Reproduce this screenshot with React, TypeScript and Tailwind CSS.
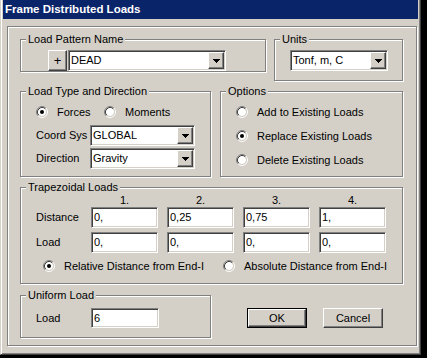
import React from 'react';

const sunken =
  'border border-t-[#808080] border-l-[#808080] border-r-white border-b-white shadow-[inset_1px_1px_0_#404040,inset_-1px_-1px_0_#d4d0c8]';
const raised =
  'border border-t-white border-l-white border-r-[#404040] border-b-[#404040] shadow-[inset_-1px_-1px_0_#808080,inset_1px_1px_0_#d4d0c8] bg-[#d4d0c8]';

function Group({ label, className, children }: { label: string; className: string; children?: React.ReactNode }) {
  return (
    <div className={`relative border border-[#808080] shadow-[inset_1px_1px_0_#fff,1px_1px_0_#fff] ${className}`}>
      <span className="absolute left-[5px] -top-[7px] bg-[#d4d0c8] px-[2px] whitespace-nowrap">{label}</span>
      {children}
    </div>
  );
}

function Radio({ checked }: { checked?: boolean }) {
  return (
    <svg width="12" height="12" viewBox="0 0 12 12" className="shrink-0">
      <circle cx="6" cy="6" r="4" fill="#fff" />
      <path d="M2.11 9.89A5.5 5.5 0 0 1 9.89 2.11" fill="none" stroke="#808080" />
      <path d="M9.89 2.11A5.5 5.5 0 0 1 2.11 9.89" fill="none" stroke="#fff" />
      <path d="M2.82 9.18A4.5 4.5 0 0 1 9.18 2.82" fill="none" stroke="#404040" />
      <path d="M9.18 2.82A4.5 4.5 0 0 1 2.82 9.18" fill="none" stroke="#d4d0c8" />
      {checked && <circle cx="6" cy="6" r="2" fill="#000" />}
    </svg>
  );
}

function RadioItem({ label, checked, className = '' }: { label: string; checked?: boolean; className?: string }) {
  return (
    <div className={`flex items-center h-[14px] ${className}`}>
      <Radio checked={checked} />
      <span className="ml-[9px] whitespace-nowrap">{label}</span>
    </div>
  );
}

function Combo({ value, className }: { value: string; className: string }) {
  return (
    <div className={`flex items-stretch bg-white p-[1px] ${sunken} ${className}`}>
      <span className="flex-1 flex items-center pl-[1px] whitespace-nowrap">{value}</span>
      <div className={`w-[16px] flex items-center justify-center ${raised}`}>
        <svg width="7" height="4" viewBox="0 0 7 4">
          <path d="M0 0h7v1h-1v1h-1v1h-1v1h-1v-1h-1v-1h-1v-1h-1z" fill="#000" />
        </svg>
      </div>
    </div>
  );
}

function Field({ value }: { value: string }) {
  return <div className={`w-[67px] h-[21px] bg-white flex items-center pl-[2px] ${sunken}`}>{value}</div>;
}

export default function App() {
  return (
    <div className="min-h-screen w-full bg-black font-['Liberation_Sans',Arial,sans-serif] text-[11px] leading-[13px] text-black">
      <div className="w-[421px] h-[355px] bg-[#d4d0c8] border border-t-0 border-l-[#d4d0c8] border-r-[#404040] border-b-[#404040] shadow-[inset_1px_0_0_#fff,inset_-1px_-1px_0_#808080] px-[2px] pb-[2px] flex flex-col">
        <div className="h-[19px] shrink-0 bg-[#0a246a] text-white font-bold text-[11.5px] flex items-center pl-[2px]">
          Frame Distributed Loads
        </div>

        <div className="ml-[4px] mt-[7px] w-[410px] h-[320px] border border-[#808080] shadow-[inset_1px_1px_0_#fff,1px_1px_0_#fff] pl-[12px] pt-[12px] flex flex-col">
          {/* pattern + units */}
          <div className="flex items-start">
            <Group label="Load Pattern Name" className="w-[246px] h-[33px] pl-[27px] pt-[10px]">
              <div className="flex">
                <div className={`w-[19px] h-[21px] flex items-center justify-center text-[13px] ${raised}`}>+</div>
                <Combo value="DEAD" className="ml-[1px] w-[158px] h-[21px]" />
              </div>
            </Group>
            <Group label="Units" className="ml-[8px] w-[129px] h-[42px] pl-[15px] pt-[10px]">
              <Combo value="Tonf, m, C" className="w-[98px] h-[21px]" />
            </Group>
          </div>

          {/* load type + options */}
          <div className="flex items-start mt-[10px]">
            <Group label="Load Type and Direction" className="w-[191px] h-[86px] pl-[15px] pt-[13px] flex flex-col">
              <div className="flex">
                <RadioItem label="Forces" checked className="w-[68px]" />
                <RadioItem label="Moments" />
              </div>
              <div className="flex items-center mt-[6px]">
                <span className="w-[54px]">Coord Sys</span>
                <Combo value="GLOBAL" className="w-[105px] h-[21px]" />
              </div>
              <div className="flex items-center mt-[2px]">
                <span className="w-[54px]">Direction</span>
                <Combo value="Gravity" className="w-[105px] h-[21px]" />
              </div>
            </Group>
            <Group label="Options" className="ml-[9px] w-[183px] h-[86px] pl-[15px] pt-[13px] flex flex-col gap-[10px]">
              <RadioItem label="Add to Existing Loads" />
              <RadioItem label="Replace Existing Loads" checked />
              <RadioItem label="Delete Existing Loads" />
            </Group>
          </div>

          {/* trapezoidal */}
          <Group label="Trapezoidal Loads" className="mt-[10px] w-[383px] h-[97px] pl-[15px] pt-[6px] flex flex-col">
            <div className="flex h-[13px]">
              <span className="w-[55px]" />
              <div className="flex gap-[9px]">
                {['1.', '2.', '3.', '4.'].map((h) => (
                  <span key={h} className="w-[67px] text-center">{h}</span>
                ))}
              </div>
            </div>
            <div className="flex items-center">
              <span className="w-[55px]">Distance</span>
              <div className="flex gap-[9px]">
                {['0,', '0,25', '0,75', '1,'].map((v, i) => (
                  <Field key={i} value={v} />
                ))}
              </div>
            </div>
            <div className="flex items-center mt-[4px]">
              <span className="w-[55px]">Load</span>
              <div className="flex gap-[9px]">
                {['0,', '0,', '0,', '0,'].map((v, i) => (
                  <Field key={i} value={v} />
                ))}
              </div>
            </div>
            <div className="flex mt-[6px] ml-[7px]">
              <RadioItem label="Relative Distance from End-I" checked className="w-[180px]" />
              <RadioItem label="Absolute Distance from End-I" />
            </div>
          </Group>

          {/* uniform + buttons */}
          <div className="flex items-start mt-[11px]">
            <Group label="Uniform Load" className="w-[191px] h-[43px] pl-[15px] pt-[12px]">
              <div className="flex items-center">
                <span className="w-[55px]">Load</span>
                <div className={`w-[68px] h-[20px] bg-white flex items-center pl-[2px] ${sunken}`}>6</div>
              </div>
            </Group>
            <div className="ml-[36px] mt-[13px] w-[60px] h-[20px] border border-black flex">
              <div className={`flex-1 flex items-center justify-center ${raised}`}>OK</div>
            </div>
            <div className={`ml-[16px] mt-[13px] w-[60px] h-[20px] flex items-center justify-center ${raised}`}>Cancel</div>
          </div>
        </div>
      </div>
    </div>
  );
}
